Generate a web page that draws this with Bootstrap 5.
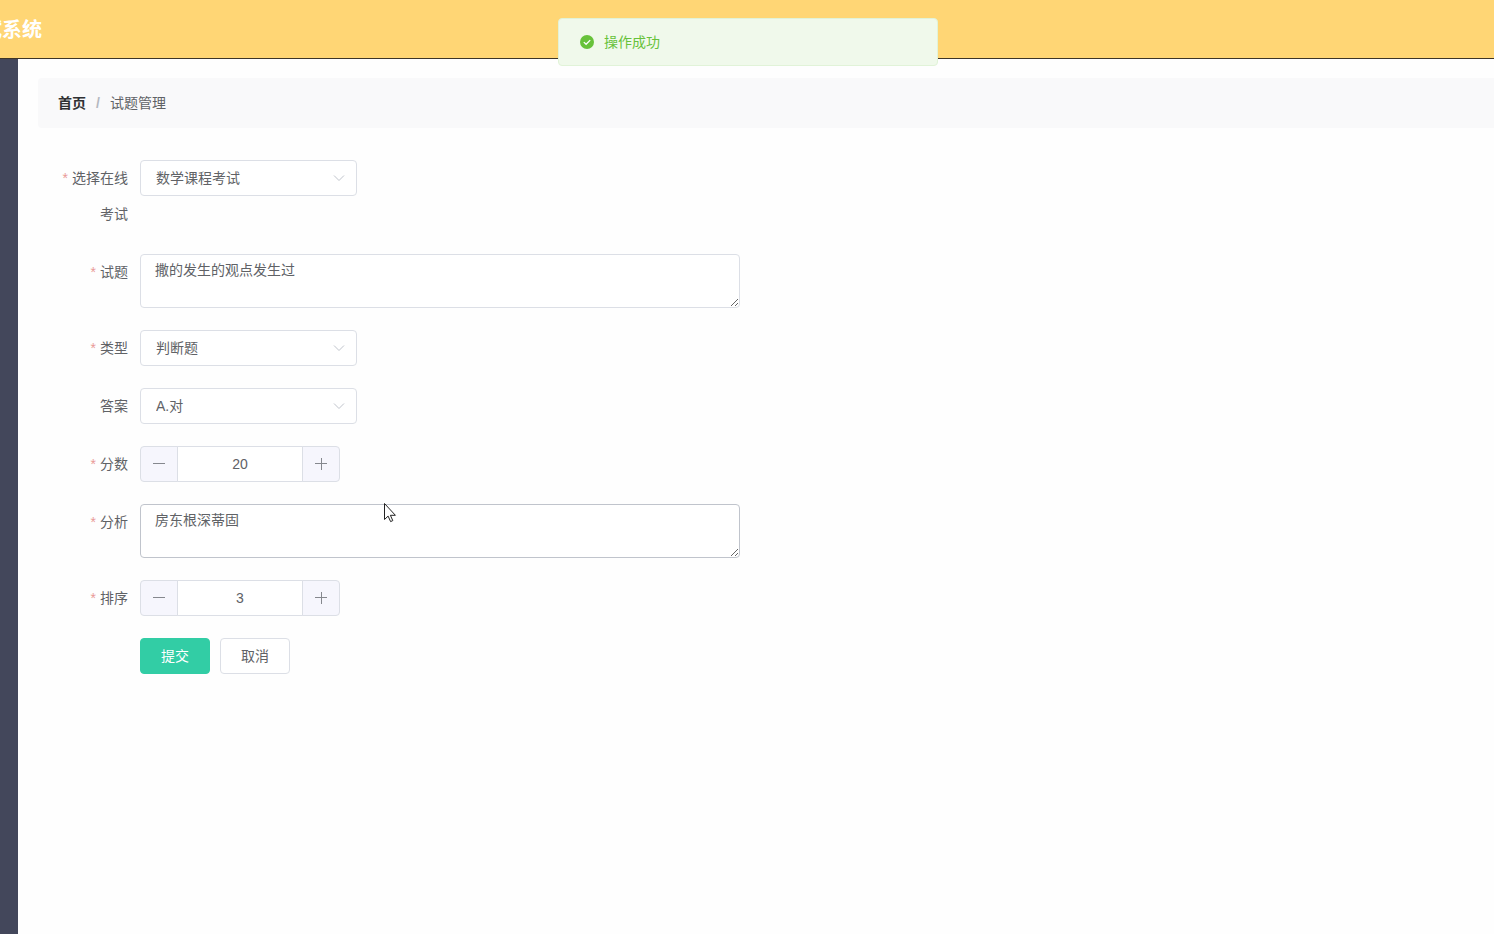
<!DOCTYPE html>
<html lang="zh-CN">
<head>
<meta charset="utf-8">
<meta name="viewport" content="width=device-width, initial-scale=1">
<title>试题管理</title>
<link href="https://cdn.jsdelivr.net/npm/bootstrap@5.3.0/dist/css/bootstrap.min.css" rel="stylesheet">
<style>
  body { font-family: "Liberation Sans", "Noto Sans CJK SC", sans-serif; font-size: 14px; color: #606266; background: #fefefe; }
  .topbar { height: 59px; background: #ffd675; border-bottom: 1px solid #3d3527; }
  .brand-title { width: 42px; font-size: 20px; line-height: 60px; color: #fff; white-space: nowrap; }
  .side { width: 18px; background: #43475b; }
  .content { padding: 19px 0 0 20px; }
  .crumbs { height: 50px; padding-left: 20px; background: #f9f9fa; border-radius: 4px 0 0 4px; --bs-breadcrumb-divider-color: #b4b8c0; --bs-breadcrumb-item-padding-x: 10px; }
  .crumbs a { color: #303133; }
  .crumbs .breadcrumb-item.active { color: #606266; }
  .crumbs .breadcrumb-item + .breadcrumb-item::before { font-weight: 700; }
  .editor { padding: 32px 20px 32px 22px; gap: 22px; }
  .field-label { width: 80px; padding-right: 12px; line-height: 36px; text-align: right; }
  .required::before { content: "*"; color: #e99a97; margin-right: 4px; }
  .form-control, .form-select { font-size: 14px; color: #606266; border: 1px solid #dcdfe6; border-radius: 4px; background-color: #fff; }
  .form-select { width: 217px; height: 36px; padding: 0 32px 0 15px; line-height: 34px; background-size: 12px 12px; background-position: right 11px center;
    background-image: url("data:image/svg+xml,%3Csvg xmlns='http://www.w3.org/2000/svg' viewBox='0 0 12 12'%3E%3Cpath d='M1 3.5l5 5 5-5' fill='none' stroke='%23c0c4cc'/%3E%3C/svg%3E"); }
  textarea.form-control { max-width: 600px; height: 54px; min-height: 54px; padding: 5px 14px; line-height: 21px; }
  textarea.hovered { border-color: #c0c4cc; }
  .stepper { width: 200px; height: 36px; }
  .stepper .btn { width: 38px; padding: 0; border: 1px solid #dcdfe6; background: #f6f6fd; color: #85888e; border-radius: 4px; display: flex; align-items: center; justify-content: center; }
  .stepper .form-control { padding: 0; }
  .actions { gap: 10px; }
  .action { width: 70px; height: 36px; padding: 0; font-size: 14px; border-radius: 4px; }
  .action-main, .action-main:hover { background: #32cda5; border-color: #32cda5; color: #fff; }
  .action-plain { background: #fff; border-color: #dcdfe6; color: #606266; }
  .toast-message { top: 18px; width: 380px; height: 48px; left: 50%; margin-left: -189px; padding-left: 21px; gap: 10px; color: #67c23a; background: #f0f9eb; border: 1px solid #e1f3d8; border-radius: 4px; z-index: 10; }
  .pointer { left: 383px; top: 502px; pointer-events: none; }
</style>
</head>
<body>
<div class="d-flex flex-column min-vh-100">
  <header class="topbar">
    <div class="brand-title d-flex justify-content-end overflow-hidden fw-bold">试系统</div>
  </header>
  <div class="d-flex flex-grow-1">
    <aside class="side flex-shrink-0"></aside>
    <main class="content flex-grow-1">
      <nav aria-label="breadcrumb">
        <ol class="breadcrumb crumbs align-items-center mb-0">
          <li class="breadcrumb-item"><a href="#" class="fw-bold text-decoration-none">首页</a></li>
          <li class="breadcrumb-item active" aria-current="page">试题管理</li>
        </ol>
      </nav>
      <form class="editor d-flex flex-column">
        <div class="d-flex align-items-start">
          <label class="field-label required flex-shrink-0" for="exam">选择在线考试</label>
          <select class="form-select" id="exam"><option>数学课程考试</option></select>
        </div>
        <div class="d-flex align-items-start">
          <label class="field-label required flex-shrink-0" for="question">试题</label>
          <textarea class="form-control" id="question">撒的发生的观点发生过</textarea>
        </div>
        <div class="d-flex align-items-start">
          <label class="field-label required flex-shrink-0" for="kind">类型</label>
          <select class="form-select" id="kind"><option>判断题</option></select>
        </div>
        <div class="d-flex align-items-start">
          <label class="field-label flex-shrink-0" for="answer">答案</label>
          <select class="form-select" id="answer"><option>A.对</option></select>
        </div>
        <div class="d-flex align-items-start">
          <label class="field-label required flex-shrink-0" for="score">分数</label>
          <div class="input-group stepper">
            <button class="btn" type="button" aria-label="减少"><svg width="14" height="14" viewBox="0 0 14 14" stroke="currentColor"><path d="M1 6.5h12"/></svg></button>
            <input class="form-control text-center" id="score" type="text" inputmode="numeric" value="20">
            <button class="btn" type="button" aria-label="增加"><svg width="14" height="14" viewBox="0 0 14 14" stroke="currentColor"><path d="M1 6.5h12M7.5 1v12"/></svg></button>
          </div>
        </div>
        <div class="d-flex align-items-start">
          <label class="field-label required flex-shrink-0" for="analysis">分析</label>
          <textarea class="form-control hovered" id="analysis">房东根深蒂固</textarea>
        </div>
        <div class="d-flex align-items-start">
          <label class="field-label required flex-shrink-0" for="order">排序</label>
          <div class="input-group stepper">
            <button class="btn" type="button" aria-label="减少"><svg width="14" height="14" viewBox="0 0 14 14" stroke="currentColor"><path d="M1 6.5h12"/></svg></button>
            <input class="form-control text-center" id="order" type="text" inputmode="numeric" value="3">
            <button class="btn" type="button" aria-label="增加"><svg width="14" height="14" viewBox="0 0 14 14" stroke="currentColor"><path d="M1 6.5h12M7.5 1v12"/></svg></button>
          </div>
        </div>
        <div class="d-flex">
          <div class="field-label flex-shrink-0"></div>
          <div class="actions d-flex">
            <button class="btn action action-main" type="submit">提交</button>
            <button class="btn action action-plain" type="button">取消</button>
          </div>
        </div>
      </form>
    </main>
  </div>
</div>
<div class="toast-message position-absolute d-flex align-items-center" role="alert">
  <svg width="14" height="14" viewBox="0 0 14 14"><circle cx="7" cy="7" r="7" fill="#67c23a"/><path d="M3.8 7.1l2.3 2.2 4.1-4.2" fill="none" stroke="#fff" stroke-width="1.3"/></svg>
  <span>操作成功</span>
</div>
<svg class="pointer position-absolute" width="14" height="22" viewBox="0 0 14 22" aria-hidden="true"><path d="M1.5 1.5v16l3.6-3.4 2.5 5.5 2.2-1-2.4-5.3h5z" fill="#fff" stroke="#222"/></svg>
<script src="https://cdn.jsdelivr.net/npm/bootstrap@5.3.0/dist/js/bootstrap.bundle.min.js"></script>
</body>
</html>
